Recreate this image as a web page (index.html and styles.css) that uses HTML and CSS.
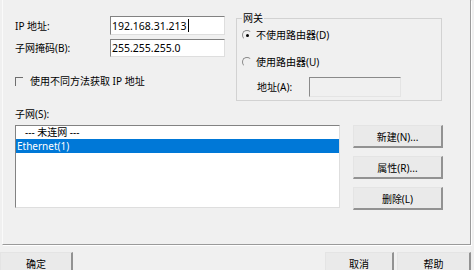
FILE: index.html
```html
<!DOCTYPE html>
<html>
  <head>
    <meta charset="utf-8">
    <title>IP 地址</title>
    <link rel="stylesheet" href="styles.css">
  </head>
  <body>
    <div class="panel">
      <div class="top">
        <div class="addr">
          <div class="row row-ip">
            <span class="lbl">IP 地址:</span>
            <div class="field">192.168.31.213<span class="caret"></span></div>
          </div>
          <div class="row row-mask">
            <span class="lbl">子网掩码(B):</span>
            <div class="field">255.255.255.0</div>
          </div>
          <div class="check"><span class="box"></span>使用不同方法获取 IP 地址</div>
        </div>
        <fieldset class="gateway">
          <legend>网关</legend>
          <div class="radio radio-first"><span class="dot on"></span>不使用路由器(D)</div>
          <div class="radio radio-second"><span class="dot"></span>使用路由器(U)</div>
          <div class="gw-addr">
            <span class="gw-lbl">地址(A):</span>
            <div class="field off"></div>
          </div>
        </fieldset>
      </div>
      <div class="subnet-lbl">子网(S):</div>
      <div class="subnet">
        <ul class="list">
          <li class="sep">--- 未连网 ---</li>
          <li class="sel">Ethernet(1)</li>
        </ul>
        <div class="side">
          <button class="btn">新建(N)...</button>
          <button class="btn">属性(R)...</button>
          <button class="btn">删除(L)</button>
        </div>
      </div>
    </div>
    <div class="foot">
      <button class="btn ok">确定</button>
      <span class="spacer"></span>
      <button class="btn cancel">取消</button>
      <button class="btn help">帮助</button>
    </div>
  </body>
</html>
```

FILE: styles.css
```css
html {font-family: "Noto Sans", "Noto Sans CJK SC", sans-serif; font-size: 10px; color: #000;}
body {margin: 0; background-color: #f0f0f0; width: 474px; height: 270px; overflow: hidden;}

.panel {box-sizing: border-box; margin-left: 2px; width: 469px; height: 245px; padding: 12px 0 0 12px; border-left: 1px solid #fafafa; border-right: 1px solid #9a9a9a; border-bottom: 1px solid #9a9a9a; box-shadow: 1px 1px 0 #fff;}

.top {display: flex; align-items: flex-start; gap: 11px;}
.addr {width: 210px; margin-top: 4px;}
.row {display: flex; align-items: center;}
.row .lbl {width: 95px; line-height: 12px;}
.row-ip .field {height: 19px;}
.row-mask {margin-top: 4px;}
.row-mask .field {height: 18px;}

.field {box-sizing: border-box; width: 115px; padding-left: 1px; background: #fff; border: 1px solid; border-color: #828282 #dedede #dedede #828282; display: flex; align-items: center; font-size: 10.5px;}
.field.off {width: 92px; height: 20px; background: #f0f0f0; border-color: #8a8a8a #e4e4e4 #e4e4e4 #8a8a8a;}
.caret {display: inline-block; width: 0; height: 13px; margin-left: 1px; border-right: 1px solid #000;}

.check {display: flex; align-items: center; margin-top: 18px; line-height: 12px;}
.check .box {box-sizing: border-box; width: 8px; height: 9px; margin-right: 7px; border-top: 1px solid #6e6e6e; border-left: 1px solid #6e6e6e;}

.gateway {box-sizing: border-box; width: 206px; margin: 0; padding: 0 0 3px 5px; border: 1px solid #d2d2d2; min-width: 0;}
.gateway legend {padding: 0 1px; line-height: 12px;}
.radio {display: flex; align-items: center; height: 14px; line-height: 12px;}
.radio-first {margin-top: 4px;}
.radio-second {margin-top: 13px;}
.dot {box-sizing: border-box; width: 10px; height: 10px; margin-right: 4px; border-radius: 50%; border: 1px solid; border-color: #8a8a8a #f0f0f0 #f0f0f0 #8a8a8a; display: flex; align-items: center; justify-content: center;}
.dot.on::after {content: ""; width: 3px; height: 3px; border-radius: 50%; background: #000;}
.gw-addr {display: flex; align-items: center; margin-top: 8px; padding-left: 15px;}
.gw-lbl {width: 52px; line-height: 12px;}

.subnet-lbl {margin-top: 7px; line-height: 12px;}
.subnet {display: flex; align-items: flex-start; margin-top: 5px;}
.list {box-sizing: border-box; width: 325px; height: 83px; margin: 0; padding: 0; list-style: none; background: #fff; border: 1px solid; border-color: #828282 #dedede #dedede #828282;}
.list li {height: 14px; line-height: 14px; padding-left: 1px;}
.list .sep {height: 13px; line-height: 13px; padding-left: 9px;}
.list .sel {background: #0078d7; color: #fff;}

.side {display: flex; flex-direction: column; gap: 8px; margin-left: 13px;}
.btn {box-sizing: border-box; width: 90px; height: 23px; margin: 0; padding: 0; font: inherit; color: #000; background: #eaeaea; border-style: solid; border-width: 1px 2px 2px 1px; border-color: #e4e4e4 #929292 #929292 #e4e4e4;}

.foot {display: flex; margin-top: 7px;}
.foot .btn {height: 24px;}
.foot .ok {width: 73px;}
.spacer {flex: 1;}
.foot .cancel {width: 69px; margin-right: 3px;}
.foot .help {width: 74px; margin-right: 3px;}
```
